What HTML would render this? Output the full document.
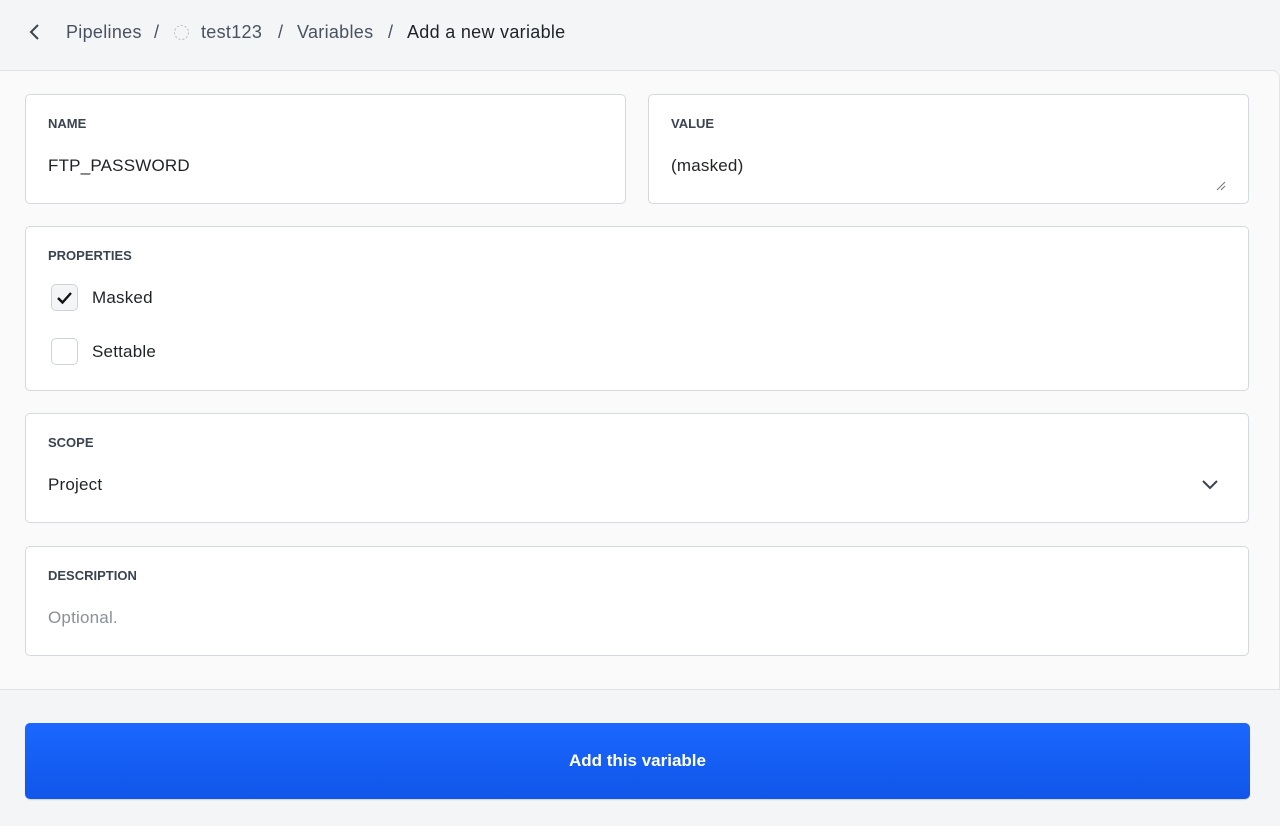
<!DOCTYPE html>
<html><head><style>
*{box-sizing:border-box;margin:0;padding:0}
body{width:1280px;height:826px;background:#f4f5f7;font-family:"Liberation Sans",sans-serif;position:relative;overflow:hidden;color:#1f2328}
.crumb{position:absolute;top:21px;left:0;height:22px;font-size:18px;letter-spacing:.3px;color:#4a5260;display:flex;align-items:center}
.main{position:absolute;left:0;top:70px;width:1280px;height:620px;background:#fafafa;border-top:1px solid #dfe2e6;border-bottom:1px solid #dfe2e6;border-right:1px solid #e3e5e8;border-top-right-radius:8px}
.box{position:absolute;background:#fff;border:1px solid #d5d8dd;border-radius:5px}
.lab{position:absolute;left:22px;top:21px;font-size:13px;font-weight:bold;color:#3b4250;letter-spacing:0}
.val{position:absolute;left:22px;font-size:17px;letter-spacing:.2px;color:#1f2328}
.cb{position:absolute;left:25px;width:27px;height:27px;border:1px solid #cfd3d9;border-radius:5px;background:#fff}
.btn{position:absolute;left:25px;top:723px;width:1225px;height:76px;border-radius:5px;background:linear-gradient(#1b67ff,#1056e9);color:#fff;font-size:17px;font-weight:bold;text-align:center;line-height:76px;box-shadow:0 1px 1px rgba(0,0,0,.15)}
</style></head><body>
<div class="crumb">
<svg style="position:absolute;left:28px;top:2px" width="14" height="18" viewBox="0 0 14 18"><path d="M10 2 L3 9 L10 16" fill="none" stroke="#3b4250" stroke-width="2"/></svg>
<span style="position:absolute;left:66px;white-space:nowrap">Pipelines</span>
<span style="position:absolute;left:154px">/</span>
<svg style="position:absolute;left:173px;top:3px" width="17" height="17"><circle cx="8.5" cy="8.5" r="7" fill="none" stroke="#b8bcc4" stroke-width="1" stroke-dasharray="2 2"/></svg>
<span style="position:absolute;left:201px">test123</span>
<span style="position:absolute;left:278px">/</span>
<span style="position:absolute;left:297px">Variables</span>
<span style="position:absolute;left:388px">/</span>
<span style="position:absolute;left:407px;white-space:nowrap;color:#1f2328">Add a new variable</span>
</div>
<div class="main"></div>
<div class="box" style="left:25px;top:94px;width:601px;height:110px"><div class="lab">NAME</div><div class="val" style="top:61px">FTP_PASSWORD</div></div>
<div class="box" style="left:648px;top:94px;width:601px;height:110px"><div class="lab">VALUE</div><div class="val" style="top:61px">(masked)</div>
<svg style="position:absolute;right:22px;bottom:12px" width="10" height="10"><path d="M1 9 L9 1 M5 9 L9 5" stroke="#777" stroke-width="1"/></svg></div>
<div class="box" style="left:25px;top:226px;width:1224px;height:165px"><div class="lab">PROPERTIES</div>
<div class="cb" style="top:57px;background:#f4f5f7"><svg width="25" height="25"><path d="M6 13 L10.5 17.5 L19 8" fill="none" stroke="#111" stroke-width="2.4"/></svg></div>
<div class="val" style="left:66px;top:61px">Masked</div>
<div class="cb" style="top:111px"></div>
<div class="val" style="left:66px;top:115px">Settable</div></div>
<div class="box" style="left:25px;top:413px;width:1224px;height:110px"><div class="lab">SCOPE</div><div class="val" style="top:61px">Project</div>
<svg style="position:absolute;left:1175px;top:65px" width="18" height="12"><path d="M2 2 L9 9 L16 2" fill="none" stroke="#3b4250" stroke-width="2"/></svg></div>
<div class="box" style="left:25px;top:546px;width:1224px;height:110px"><div class="lab">DESCRIPTION</div><div class="val" style="top:61px;color:#8a9099">Optional.</div></div>
<div class="btn">Add this variable</div>
</body></html>
